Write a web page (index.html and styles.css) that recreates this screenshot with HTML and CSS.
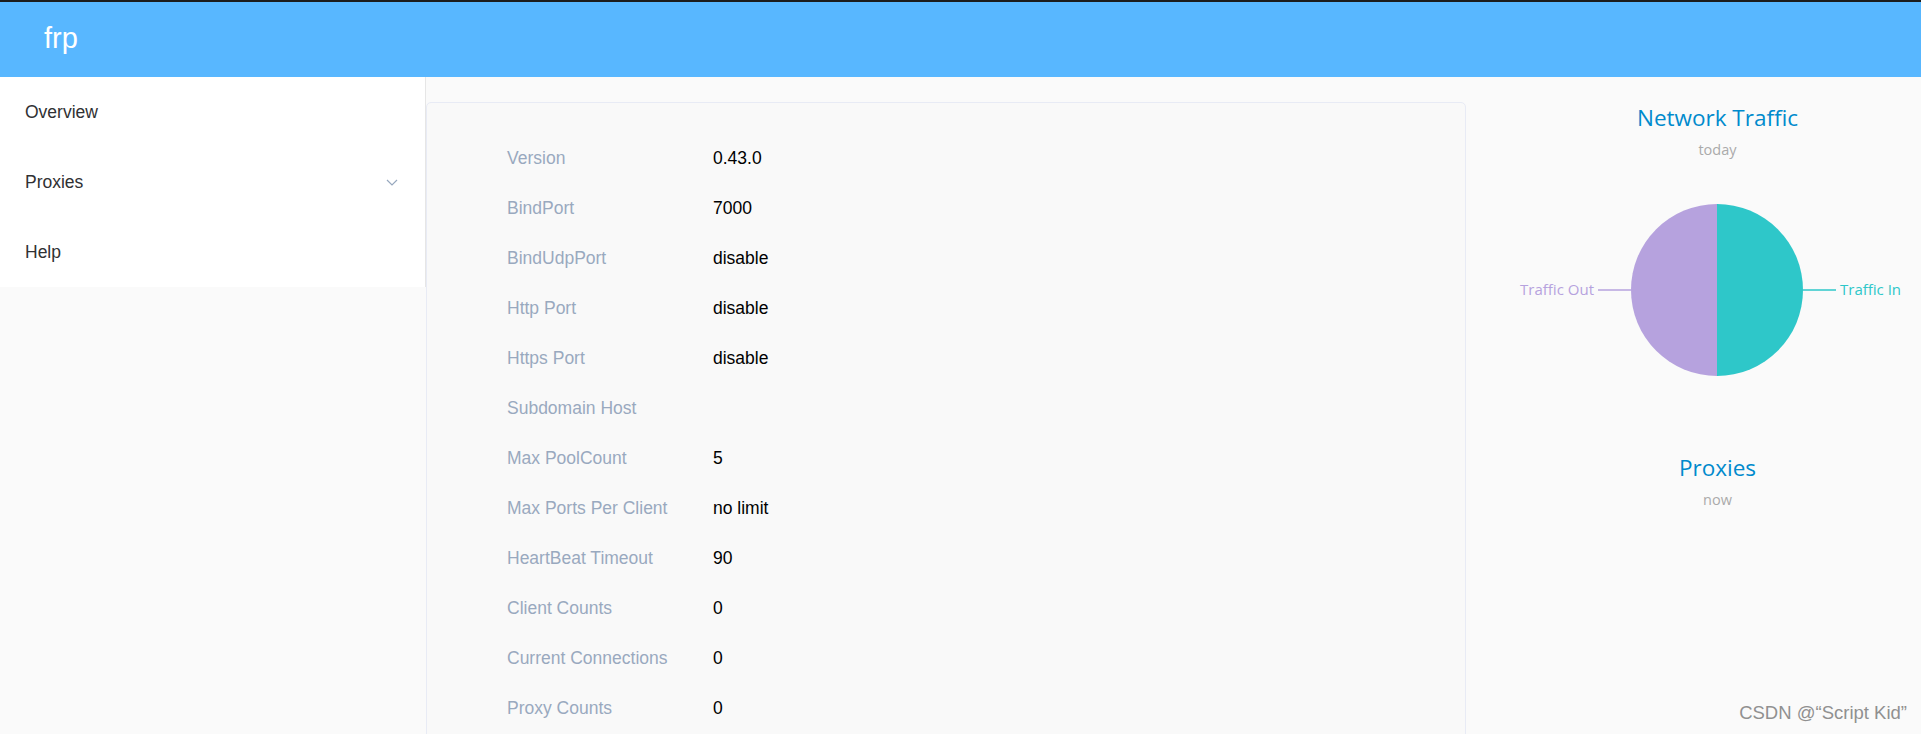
FILE: index.html
```html
<!DOCTYPE html>
<html lang="en">
<head>
  <meta charset="UTF-8">
  <title>frp</title>
  <link rel="stylesheet" href="styles.css">
</head>
<body>
  <div class="header">
    <span class="brand">frp</span>
  </div>

  <div class="layout">
    <div class="sidebar">
      <div class="menu-item">Overview</div>
      <div class="menu-item submenu">
        <span>Proxies</span>
        <svg class="arrow" width="12" height="7" viewBox="0 0 12 7"><path d="M1 1 L6 6 L11 1" fill="none" stroke="#97a8be" stroke-width="1.2"/></svg>
      </div>
      <div class="menu-item">Help</div>
    </div>

    <div class="main">
      <div class="card">
        <div class="row"><span class="label">Version</span><span class="value">0.43.0</span></div>
        <div class="row"><span class="label">BindPort</span><span class="value">7000</span></div>
        <div class="row"><span class="label">BindUdpPort</span><span class="value">disable</span></div>
        <div class="row"><span class="label">Http Port</span><span class="value">disable</span></div>
        <div class="row"><span class="label">Https Port</span><span class="value">disable</span></div>
        <div class="row"><span class="label">Subdomain Host</span><span class="value"></span></div>
        <div class="row"><span class="label">Max PoolCount</span><span class="value">5</span></div>
        <div class="row"><span class="label">Max Ports Per Client</span><span class="value">no limit</span></div>
        <div class="row"><span class="label">HeartBeat Timeout</span><span class="value">90</span></div>
        <div class="row"><span class="label">Client Counts</span><span class="value">0</span></div>
        <div class="row"><span class="label">Current Connections</span><span class="value">0</span></div>
        <div class="row"><span class="label">Proxy Counts</span><span class="value">0</span></div>
      </div>

      <div class="charts">
        <div class="chart">
          <div class="chart-title">Network Traffic</div>
          <div class="chart-sub">today</div>
          <svg class="pie" width="406" height="260" viewBox="0 0 406 260">
            <path d="M203 44 A86 86 0 0 1 203 216 Z" fill="#2ec7c9"/>
            <path d="M203 216 A86 86 0 0 1 203 44 Z" fill="#b6a2de"/>
            <line x1="84" y1="130" x2="117" y2="130" stroke="#b6a2de" stroke-width="1.3"/>
            <line x1="289" y1="130" x2="322" y2="130" stroke="#2ec7c9" stroke-width="1.3"/>
            <text x="80" y="135" text-anchor="end" class="pie-label" fill="#b6a2de">Traffic Out</text>
            <text x="326" y="135" class="pie-label" fill="#2ec7c9">Traffic In</text>
          </svg>
        </div>
        <div class="chart">
          <div class="chart-title">Proxies</div>
          <div class="chart-sub">now</div>
        </div>
      </div>
    </div>
  </div>

  <div class="watermark">CSDN @“Script Kid”</div>
</body>
</html>
```

FILE: styles.css
```css
body {
  margin: 0;
  font-family: 'Liberation Sans', Arial, sans-serif;
  background: #fafafa;
  height: 734px;
  overflow: hidden;
  position: relative;
}

.header {
  height: 75px;
  border-top: 2px solid #1c1c1c;
  background: #58b7ff;
  display: flex;
  align-items: center;
  padding-left: 44px;
}

.brand {
  color: #ffffff;
  font-size: 29px;
  margin-top: -2px;
}

.layout {
  display: flex;
  align-items: flex-start;
  height: 657px;
  overflow: hidden;
}

.sidebar {
  width: 425px;
  flex-shrink: 0;
  background: #ffffff;
  border-right: 1px solid #e6e6e6;
}

.menu-item {
  height: 70px;
  line-height: 70px;
  padding-left: 25px;
  font-size: 17.5px;
  color: #303133;
}

.submenu {
  display: flex;
  justify-content: space-between;
  align-items: center;
  padding-right: 27px;
}

.main {
  flex: 1;
  display: flex;
  align-items: flex-start;
}

.card {
  width: 1040px;
  flex-shrink: 0;
  box-sizing: border-box;
  margin-top: 25px;
  border: 1px solid #e8ebf5;
  border-radius: 5px;
  background: #f9f9f9;
  padding: 30px 0 20px 80px;
}

.row {
  height: 50px;
  display: flex;
  align-items: center;
  font-size: 17.5px;
}

.label {
  width: 206px;
  color: #99a9bf;
}

.value {
  color: #000000;
}

.charts {
  flex: 1;
  padding-left: 48px;
}

.chart {
  height: 350px;
  padding-top: 26px;
  box-sizing: border-box;
  text-align: center;
  font-family: 'Open Sans', 'Noto Sans', sans-serif;
}

.chart-title {
  color: #008acd;
  font-size: 22.5px;
  line-height: 30px;
}

.chart-sub {
  color: #aaaaaa;
  font-size: 14.5px;
  line-height: 20px;
  margin-top: 7px;
}

.pie {
  display: block;
}

.pie-label {
  font-family: 'Open Sans', 'Noto Sans', sans-serif;
  font-size: 15px;
}

.watermark {
  position: absolute;
  right: 14px;
  bottom: 10px;
  font-size: 18.5px;
  color: #909090;
}
```
